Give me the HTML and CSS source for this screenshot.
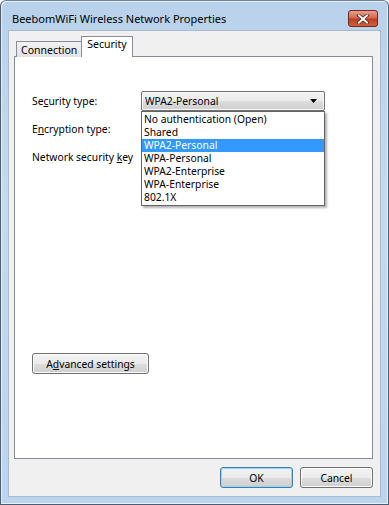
FILE: index.html
```html
<!DOCTYPE html>
<html lang="en">
<head>
    <meta charset="UTF-8">
    <meta name="viewport" content="width=device-width, initial-scale=1.0">
    <title>BeebomWiFi Wireless Network Properties</title>
    <link rel="stylesheet" href="styles.css">
</head>
<body>
    <div class="window">
        <div class="title-bar">
            <span class="title-text">BeebomWiFi Wireless Network Properties</span>
            <div class="close-button" aria-label="Close">
                <svg width="14" height="10" viewBox="0 0 14 10">
                    <path d="M3 1.5 L11 8.5 M11 1.5 L3 8.5" stroke="#5a2218" stroke-width="3.6" stroke-linecap="square"/>
                    <path d="M3 1.5 L11 8.5 M11 1.5 L3 8.5" stroke="#ffffff" stroke-width="2" stroke-linecap="square"/>
                </svg>
            </div>
        </div>
        <div class="client">
            <div class="tabs">
                <div class="tab">Connection</div>
                <div class="tab tab-active">Security</div>
            </div>
            <div class="tab-panel">
                <div class="form-row">
                    <span class="label">Se<u>c</u>urity type:</span>
                    <div class="combo-wrap">
                        <div class="combo">
                            <span>WPA2-Personal</span>
                            <svg class="combo-arrow" width="8" height="5" viewBox="0 0 8 5"><path d="M0 0 H7 L3.5 4 Z" fill="#000"/></svg>
                        </div>
                        <ul class="dropdown">
                            <li>No authentication (Open)</li>
                            <li>Shared</li>
                            <li class="selected">WPA2-Personal</li>
                            <li>WPA-Personal</li>
                            <li>WPA2-Enterprise</li>
                            <li>WPA-Enterprise</li>
                            <li>802.1X</li>
                        </ul>
                    </div>
                </div>
                <div class="form-row">
                    <span class="label">E<u>n</u>cryption type:</span>
                </div>
                <div class="form-row">
                    <span class="label">Network security <u>k</u>ey</span>
                </div>
                <div class="spacer"></div>
                <button class="win-button advanced-button">A<u>d</u>vanced settings</button>
            </div>
            <div class="button-row">
                <button class="win-button default-button">OK</button>
                <button class="win-button">Cancel</button>
            </div>
        </div>
    </div>
</body>
</html>
```

FILE: styles.css
```css
* {
    margin: 0;
    padding: 0;
    box-sizing: border-box;
    font-family: "Noto Sans", "Open Sans", Arial, sans-serif;
}

body {
    background-color: #ffffff;
    width: 389px;
    height: 505px;
    overflow: hidden;
}

.window {
    width: 389px;
    height: 505px;
    display: flex;
    flex-direction: column;
    padding: 0 7px 7px 7px;
    background: linear-gradient(to bottom, #b9d1ea 0%, #c4daf0 40%, #bcd4ee 100%);
    border: 1px solid #4a5d74;
    border-top-color: #6f8297;
    border-radius: 6px 6px 0 0;
    box-shadow: inset 1px 1px 0 #e6f0fb, inset -1px -1px 0 #e6f0fb;
}

.title-bar {
    height: 29px;
    display: flex;
    align-items: flex-start;
    justify-content: space-between;
    padding-left: 4px;
}

.title-text {
    font-size: 11px;
    color: #000;
    padding-top: 10px;
}

.close-button {
    width: 30px;
    height: 17px;
    margin-top: 9px;
    margin-right: 3px;
    border: 1px solid #6e2a1f;
    border-radius: 3px;
    background-color: #c9573d;
    background-image: linear-gradient(to bottom, #e8a08f 0%, #d8684f 45%, #bd3f22 55%, #d3603f 100%);
    display: flex;
    align-items: center;
    justify-content: center;
}

.client {
    flex: 1;
    background-color: #f0f0f0;
    border: 1px solid #a7bad0;
    display: flex;
    flex-direction: column;
    padding: 6px 7px 0 5px;
}

.tabs {
    display: flex;
    align-items: flex-end;
    padding-left: 2px;
    height: 20px;
    margin-bottom: -1px;
    position: relative;
    z-index: 1;
}

.tab {
    font-size: 10.5px;
    height: 16px;
    padding: 0 4px;
    line-height: 16px;
    border: 1px solid #898c95;
    border-bottom: none;
    background: linear-gradient(to bottom, #f2f2f2, #e3e3e3);
    color: #000;
}

.tab-active {
    height: 21px;
    padding: 0 5px;
    line-height: 15px;
    background: #ffffff;
    margin-left: -1px;
}

.tab-panel {
    height: 403px;
    background: #ffffff;
    border: 1px solid #898c95;
    padding: 34px 0 0 17px;
    display: flex;
    flex-direction: column;
}

.form-row {
    display: flex;
    align-items: flex-start;
    height: 28px;
    font-size: 10.3px;
}

.label {
    width: 109px;
    padding-top: 3px;
    color: #000;
    white-space: nowrap;
}

.combo-wrap {
    position: relative;
}

.combo {
    width: 184px;
    height: 20px;
    border: 1px solid #707070;
    border-radius: 2px;
    background: linear-gradient(to bottom, #f2f2f2 0%, #ebebeb 50%, #dddddd 51%, #cfcfcf 100%);
    display: flex;
    align-items: center;
    justify-content: space-between;
    padding: 0 6px 0 3px;
    box-shadow: inset 0 0 0 1px #f8f8f8;
}

.combo span {
    font-size: 10.3px;
    color: #000;
    line-height: 14px;
}

.dropdown {
    position: absolute;
    top: 20px;
    left: 0;
    width: 184px;
    list-style: none;
    background: #ffffff;
    border: 1px solid #646464;
    box-shadow: 2px 2px 2px rgba(0, 0, 0, 0.3);
    padding: 1px 0 1px 0;
    z-index: 2;
}

.dropdown li {
    font-size: 10.3px;
    height: 13px;
    line-height: 13px;
    padding-left: 2px;
    color: #000;
}

.dropdown li.selected {
    background: #3399ff;
    color: #ffffff;
}

.spacer {
    height: 178px;
}

.win-button {
    font-size: 10.3px;
    height: 21px;
    border: 1px solid #707070;
    border-radius: 3px;
    background: linear-gradient(to bottom, #f2f2f2 0%, #ebebeb 50%, #dddddd 51%, #cfcfcf 100%);
    box-shadow: inset 0 0 0 1px #fcfcfc;
    color: #000;
    cursor: pointer;
}

.advanced-button {
    width: 117px;
    align-self: flex-start;
}

.button-row {
    display: flex;
    justify-content: flex-end;
    gap: 7px;
    padding-top: 8px;
}

.button-row .win-button {
    width: 73px;
}

.default-button {
    border-color: #3c7fb1;
    box-shadow: inset 0 0 0 1px #9ad3f1;
}
```
